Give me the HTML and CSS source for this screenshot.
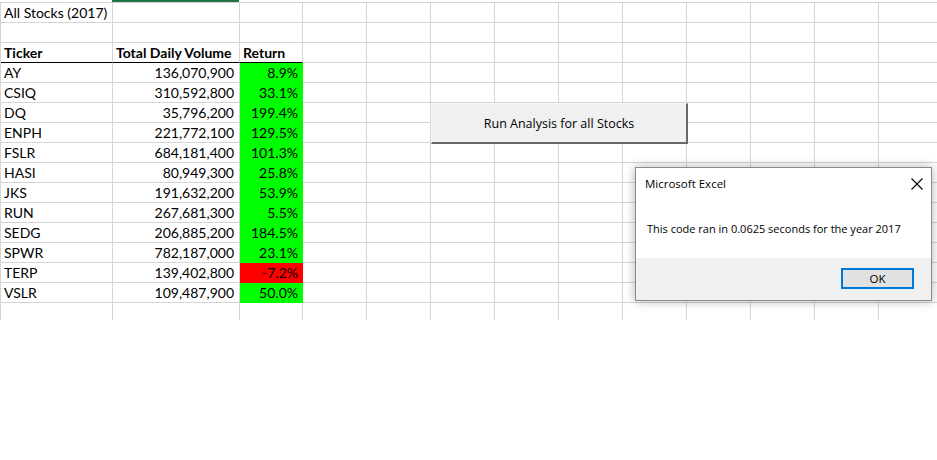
FILE: index.html
```html
<!DOCTYPE html>
<html>
<head>
<meta charset="utf-8">
<link rel="stylesheet" href="styles.css">
</head>
<body>
<div class="sheet">
  <div class="topbar"><div class="sel"></div></div>
  <div class="grid">
    <div class="c">All Stocks (2017)</div><div class="c"></div><div class="c"></div><div class="c"></div><div class="c"></div><div class="c"></div><div class="c"></div><div class="c"></div><div class="c"></div><div class="c"></div><div class="c"></div><div class="c"></div><div class="c"></div>
    <div class="c"></div><div class="c"></div><div class="c"></div><div class="c"></div><div class="c"></div><div class="c"></div><div class="c"></div><div class="c"></div><div class="c"></div><div class="c"></div><div class="c"></div><div class="c"></div><div class="c"></div>
    <div class="c hd">Ticker</div><div class="c hd">Total Daily Volume</div><div class="c hd">Return</div><div class="c"></div><div class="c"></div><div class="c"></div><div class="c"></div><div class="c"></div><div class="c"></div><div class="c"></div><div class="c"></div><div class="c"></div><div class="c"></div>
    <div class="c">AY</div><div class="c r">136,070,900</div><div class="c r g">8.9%</div><div class="c"></div><div class="c"></div><div class="c"></div><div class="c"></div><div class="c"></div><div class="c"></div><div class="c"></div><div class="c"></div><div class="c"></div><div class="c"></div>
    <div class="c">CSIQ</div><div class="c r">310,592,800</div><div class="c r g">33.1%</div><div class="c"></div><div class="c"></div><div class="c"></div><div class="c"></div><div class="c"></div><div class="c"></div><div class="c"></div><div class="c"></div><div class="c"></div><div class="c"></div>
    <div class="c">DQ</div><div class="c r">35,796,200</div><div class="c r g">199.4%</div><div class="c"></div><div class="c"></div><div class="c"></div><div class="c"></div><div class="c"></div><div class="c"></div><div class="c"></div><div class="c"></div><div class="c"></div><div class="c"></div>
    <div class="c">ENPH</div><div class="c r">221,772,100</div><div class="c r g">129.5%</div><div class="c"></div><div class="c"></div><div class="c"></div><div class="c"></div><div class="c"></div><div class="c"></div><div class="c"></div><div class="c"></div><div class="c"></div><div class="c"></div>
    <div class="c">FSLR</div><div class="c r">684,181,400</div><div class="c r g">101.3%</div><div class="c"></div><div class="c"></div><div class="c"></div><div class="c"></div><div class="c"></div><div class="c"></div><div class="c"></div><div class="c"></div><div class="c"></div><div class="c"></div>
    <div class="c">HASI</div><div class="c r">80,949,300</div><div class="c r g">25.8%</div><div class="c"></div><div class="c"></div><div class="c"></div><div class="c"></div><div class="c"></div><div class="c"></div><div class="c"></div><div class="c"></div><div class="c"></div><div class="c"></div>
    <div class="c">JKS</div><div class="c r">191,632,200</div><div class="c r g">53.9%</div><div class="c"></div><div class="c"></div><div class="c"></div><div class="c"></div><div class="c"></div><div class="c"></div><div class="c"></div><div class="c"></div><div class="c"></div><div class="c"></div>
    <div class="c">RUN</div><div class="c r">267,681,300</div><div class="c r g">5.5%</div><div class="c"></div><div class="c"></div><div class="c"></div><div class="c"></div><div class="c"></div><div class="c"></div><div class="c"></div><div class="c"></div><div class="c"></div><div class="c"></div>
    <div class="c">SEDG</div><div class="c r">206,885,200</div><div class="c r g">184.5%</div><div class="c"></div><div class="c"></div><div class="c"></div><div class="c"></div><div class="c"></div><div class="c"></div><div class="c"></div><div class="c"></div><div class="c"></div><div class="c"></div>
    <div class="c">SPWR</div><div class="c r">782,187,000</div><div class="c r g">23.1%</div><div class="c"></div><div class="c"></div><div class="c"></div><div class="c"></div><div class="c"></div><div class="c"></div><div class="c"></div><div class="c"></div><div class="c"></div><div class="c"></div>
    <div class="c">TERP</div><div class="c r">139,402,800</div><div class="c r red">-7.2%</div><div class="c"></div><div class="c"></div><div class="c"></div><div class="c"></div><div class="c"></div><div class="c"></div><div class="c"></div><div class="c"></div><div class="c"></div><div class="c"></div>
    <div class="c">VSLR</div><div class="c r">109,487,900</div><div class="c r g">50.0%</div><div class="c"></div><div class="c"></div><div class="c"></div><div class="c"></div><div class="c"></div><div class="c"></div><div class="c"></div><div class="c"></div><div class="c"></div><div class="c"></div>
    <div class="c"></div><div class="c"></div><div class="c"></div><div class="c"></div><div class="c"></div><div class="c"></div><div class="c"></div><div class="c"></div><div class="c"></div><div class="c"></div><div class="c"></div><div class="c"></div><div class="c"></div>
  </div>

  <div class="run">Run Analysis for all Stocks</div>

  <div class="dlg">
    <div class="dlg-title">
      <span>Microsoft Excel</span>
      <svg class="close" width="12" height="12" viewBox="0 0 12 12"><path d="M0.5 0.5L11.5 11.5M11.5 0.5L0.5 11.5" stroke="#000" stroke-width="1.1" fill="none"/></svg>
    </div>
    <div class="dlg-body">This code ran in 0.0625 seconds for the year 2017</div>
    <div class="dlg-foot"><div class="ok">OK</div></div>
  </div>
</div>
</body>
</html>
```

FILE: styles.css
```css
body {
  margin: 0;
  background: #fff;
  font-family: Lato, "Liberation Sans", sans-serif;
  color: #000;
}

.sheet {
  position: relative;
  width: 937px;
  height: 460px;
  overflow: hidden;
}

.topbar {
  height: 2px;
  display: flex;
}

.topbar .sel {
  margin-left: 112px;
  width: 127px;
  background: #217346;
}

.grid {
  display: grid;
  grid-template-columns: 112px 127px 63px repeat(10, 64px);
  grid-auto-rows: 20px;
  border-top: 1px solid #d4d4d4;
  border-left: 1px solid #d4d4d4;
  height: 317px;
  overflow: hidden;
  width: max-content;
}

.c {
  box-sizing: border-box;
  border-right: 1px solid #d4d4d4;
  border-bottom: 1px solid #d4d4d4;
  font-size: 14px;
  line-height: 20px;
  padding: 0 3px;
  white-space: nowrap;
}

.r {
  text-align: right;
  padding-right: 5px;
}

.hd {
  font-weight: bold;
  border-bottom-color: #000;
}

.g {
  background: #00ff00;
  border-bottom-color: #00ff00;
  border-right-color: #00ff00;
  padding-right: 4px;
}

.red {
  background: #ff0000;
  border-bottom-color: #ff0000;
  border-right-color: #ff0000;
  padding-right: 4px;
}

.run {
  position: absolute;
  left: 431px;
  top: 103px;
  width: 257px;
  height: 41px;
  box-sizing: border-box;
  background: #f0f0f0;
  border-top: 1px solid #f7f7f7;
  border-left: 1px solid #f7f7f7;
  border-right: 2px solid #696969;
  border-bottom: 2px solid #696969;
  display: flex;
  align-items: center;
  justify-content: center;
  font-family: "Open Sans", sans-serif;
  font-size: 12.5px;
}

.dlg {
  position: absolute;
  left: 635px;
  top: 167px;
  width: 297px;
  height: 134px;
  box-sizing: border-box;
  background: #fff;
  border: 1px solid #8a8a8a;
  box-shadow: 0 0 10px rgba(0, 0, 0, 0.3);
  display: flex;
  flex-direction: column;
  font-family: "Open Sans", sans-serif;
  font-size: 11px;
}

.dlg-title {
  height: 31px;
  display: flex;
  align-items: center;
  justify-content: space-between;
  padding: 0 8px 0 9px;
  font-size: 11.5px;
}

.dlg-body {
  height: 59px;
  display: flex;
  align-items: center;
  padding-left: 11px;
}

.dlg-foot {
  flex: 1;
  background: #f0f0f0;
  display: flex;
  justify-content: flex-end;
  align-items: flex-start;
  padding: 10px 17px 0 0;
}

.ok {
  width: 73px;
  height: 21px;
  box-sizing: border-box;
  border: 2px solid #0078d7;
  background: #e1e1e1;
  display: flex;
  align-items: center;
  justify-content: center;
  font-size: 11.5px;
}
```
